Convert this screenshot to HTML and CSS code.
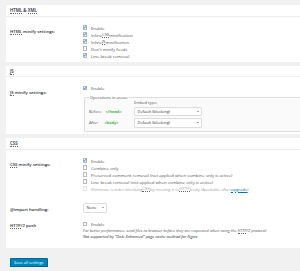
FILE: index.html
```html
<!DOCTYPE html>
<html lang="en">
<head>
<meta charset="UTF-8" />
<title>Minify settings</title>
<link rel="stylesheet" href="styles.css">
</head>
<body>
  <main class="wrap">
    <!-- HTML & XML -->
    <section class="card">
      <h2 class="card-title"><abbr>HTML</abbr> &amp; <abbr>XML</abbr></h2>
      <div class="card-body">
        <div class="row">
          <div class="row-label"><abbr>HTML</abbr> minify settings:</div>
          <div class="row-field">
            <label class="check"><span class="box on">&#10004;</span>Enable</label>
            <label class="check"><span class="box on">&#10004;</span>Inline <abbr>CSS</abbr> minification</label>
            <label class="check"><span class="box on">&#10004;</span>Inline <abbr>JS</abbr> minification</label>
            <label class="check"><span class="box"></span>Don't minify feeds</label>
            <label class="check"><span class="box on">&#10004;</span>Line break removal</label>
          </div>
        </div>
      </div>
    </section>

    <!-- JS -->
    <section class="card">
      <h2 class="card-title"><abbr>JS</abbr></h2>
      <div class="card-body">
        <div class="row">
          <div class="row-label"><abbr>JS</abbr> minify settings:</div>
          <div class="row-field">
            <label class="check"><span class="box on">&#10004;</span>Enable</label>
            <fieldset class="areas">
              <legend>Operations in areas:</legend>
              <div class="areas-grid">
                <span></span>
                <span class="areas-head">Embed type:</span>
                <span class="area-name">Before <b class="tag">&lt;/head&gt;</b></span>
                <span class="select wide">Default (blocking)</span>
                <span class="area-name">After <b class="tag tag-body">&lt;body&gt;</b></span>
                <span class="select wide">Default (blocking)</span>
              </div>
            </fieldset>
          </div>
        </div>
      </div>
    </section>

    <!-- CSS -->
    <section class="card">
      <h2 class="card-title"><abbr>CSS</abbr></h2>
      <div class="card-body">
        <div class="row">
          <div class="row-label"><abbr>CSS</abbr> minify settings:</div>
          <div class="row-field">
            <label class="check"><span class="box on">&#10004;</span>Enable</label>
            <label class="check"><span class="box"></span>Combine only</label>
            <label class="check"><span class="box"></span>Preserved comment removal (not applied when combine only is active)</label>
            <label class="check"><span class="box"></span>Line break removal (not applied when combine only is active)</label>
            <label class="check disabled"><span class="box"></span>Eliminate render-blocking <abbr>CSS</abbr> by moving it to <abbr>HTTP</abbr> body (Available after <a href="#">upgrade</a>)</label>
          </div>
        </div>
        <div class="row row-import">
          <div class="row-label">@import handling:</div>
          <div class="row-field">
            <span class="select small">None</span>
          </div>
        </div>
        <div class="row row-push">
          <div class="row-label"><abbr>HTTP</abbr>/2 push</div>
          <div class="row-field">
            <label class="check"><span class="box"></span>Enable</label>
            <p class="desc">For better performance, send files to browser before they are requested when using the <abbr>HTTP</abbr>/2 protocol.</p>
            <p class="desc strong">Not supported by "Disk: Enhanced" page cache method for Nginx</p>
          </div>
        </div>
      </div>
    </section>

    <button class="save">Save all settings</button>
  </main>
</body>
</html>
```

FILE: styles.css
```css
* {
  box-sizing: border-box;
}
body {
  margin: 0;
  background: #f1f1f1;
  font-family: 'Open Sans', 'Noto Sans', sans-serif;
  font-size: 4.3px;
  color: #555;
  overflow: hidden;
}
abbr {
  text-decoration: none;
  border-bottom: 0.4px dotted #666;
}
.wrap {
  padding: 5px 0 0 6px;
}

/* Cards */
.card {
  background: #fff;
  margin-bottom: 4px;
  margin-right: -10px;
}
.card-title {
  margin: 0;
  height: 11.5px;
  line-height: 11.5px;
  padding-left: 4px;
  font-size: 4.4px;
  font-weight: 600;
  color: #23282d;
  border-bottom: 1px solid #eee;
}
.card-body {
  padding: 7.5px 4px 2.5px;
}
.card:last-of-type .card-body {
  padding-bottom: 8px;
}
.row {
  display: flex;
}
.row-label {
  width: 73px;
  flex-shrink: 0;
  padding-top: 4px;
  font-weight: 600;
  color: #23282d;
}
.row-field {
  flex: 1;
}

/* Checkboxes */
.check {
  display: flex;
  align-items: center;
  height: 7px;
  white-space: nowrap;
}
.box {
  display: flex;
  align-items: center;
  justify-content: center;
  width: 4.4px;
  height: 4.4px;
  flex-shrink: 0;
  border: 0.5px solid #b4b9be;
  background: #fff;
  margin-right: 3.5px;
  box-shadow: inset 0 0.3px 0.6px rgba(0, 0, 0, 0.1);
  font-family: 'DejaVu Sans', sans-serif;
  font-size: 5px;
  line-height: 1;
  color: #1e8cbe;
  overflow: visible;
}
.disabled {
  color: #a0a5aa;
}
.disabled .box {
  border-color: #e5e5e5;
}
a {
  color: #0073aa;
}

/* Fieldset */
.areas {
  margin: 3px 0 0 1px;
  padding: 0 4px 3px 4px;
  border: 0.6px solid #ddd;
  border-radius: 2px;
  background: #fafafa;
}
.areas legend {
  padding: 0 1px;
  font-size: 4px;
}
.areas-grid {
  display: grid;
  grid-template-columns: 45px 68px;
  row-gap: 2px;
  align-items: center;
  font-size: 4px;
}
.areas-head {
  line-height: 4px;
  margin-top: 1px;
}
.tag {
  color: #46b450;
  margin-left: 3px;
}
.tag-body {
  margin-left: 5px;
}

/* Selects */
.select {
  display: flex;
  align-items: center;
  justify-content: space-between;
  height: 9.5px;
  padding: 0 2.5px;
  background: #fff;
  border: 0.6px solid #ddd;
  border-radius: 1px;
  box-shadow: inset 0 0.3px 0.6px rgba(0, 0, 0, 0.07);
  font-size: 4px;
  color: #32373c;
}
.select::after {
  content: "";
  border-left: 1.2px solid transparent;
  border-right: 1.2px solid transparent;
  border-top: 1.6px solid #555;
}
.select.small {
  width: 24px;
  height: 10px;
}
.row-import {
  margin-top: 10.5px;
}
.row-import .row-label {
  padding-top: 3px;
}
.row-push {
  margin-top: 8px;
}
.row-push .row-label {
  padding-top: 1.5px;
}
.desc {
  margin: 0;
  line-height: 6px;
  font-style: italic;
  font-size: 4px;
  white-space: nowrap;
}
.desc.strong {
  color: #23282d;
}

/* Button */
.save {
  margin: 6px 0 0 4px;
  height: 9.5px;
  padding: 0 3px;
  border: 0.5px solid #006799;
  border-radius: 1px;
  background: #0085ba;
  color: #fff;
  font-family: inherit;
  font-size: 4px;
  box-shadow: 0 0.4px 0 #006799;
}
```
